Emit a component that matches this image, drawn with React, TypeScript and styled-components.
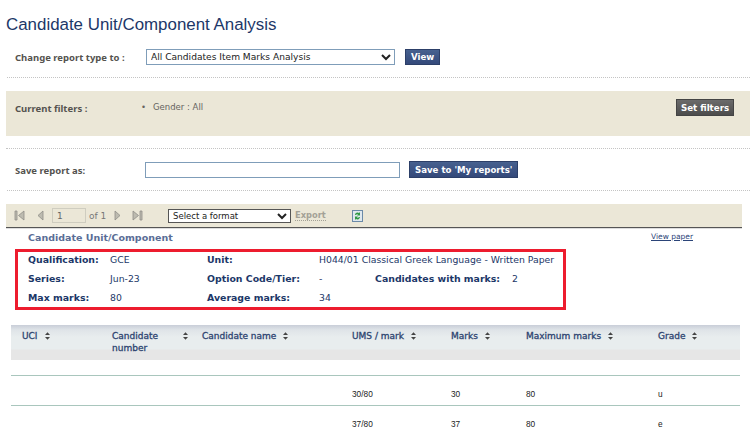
import React from "react";
import styled, { createGlobalStyle } from "styled-components";

const Global = createGlobalStyle`
  html, body { margin: 0; padding: 0; background: #fff; overflow: hidden; }
  body { font-family: "DejaVu Sans", Tahoma, sans-serif; }
`;

const Page = styled.div`
  width: 750px;
  height: 439px;
  overflow: hidden;
  position: relative;
`;

const Title = styled.h1`
  margin: 0;
  padding: 14px 0 0 6px;
  height: 35px;
  box-sizing: border-box;
  font: 400 16.900px/22px "Liberation Sans", sans-serif;
  color: #1c3768;
  white-space: nowrap;
`;

const FormRow = styled.div<{ $h: number; $pt?: number }>`
  display: flex;
  align-items: center;
  margin-left: 7px;
  padding: ${(p) => p.$pt ?? 0}px 0 0 8px;
  height: ${(p) => p.$h}px;
  box-sizing: border-box;
  border-bottom: 1px dotted #c4c4c4;
`;

const Label = styled.label`
  font: 700 9.500px/12px "Noto Sans", sans-serif;
  color: #55534f;
  white-space: nowrap;
  width: 131px;
  margin-top: 2px;
  flex: none;
`;

const Select = styled.select`
  width: 249px;
  height: 16px;
  box-sizing: border-box;
  border: 1px solid #7f9db9;
  background: #fff;
  padding: 0;
  font: 400 9.100px/12px "DejaVu Sans", sans-serif;
  color: #222;
  border-radius: 0;
`;

const PrimaryButton = styled.button<{ $h?: number; $ml?: number }>`
  margin-left: ${(p) => p.$ml ?? 10}px;
  height: ${(p) => p.$h ?? 16}px;
  padding: 0 5px;
  border: 1px solid #2c3f68;
  background: linear-gradient(#47618f, #34497a);
  color: #fff;
  font: 700 8.600px/12px "DejaVu Sans", sans-serif;
  white-space: nowrap;
`;

const FilterBand = styled.div`
  margin: 13px 0 0 6px;
  height: 45px;
  background: #ebe7d7;
  display: flex;
  align-items: flex-start;
`;

const FilterLabel = styled.span`
  font: 700 9.500px/12px "Noto Sans", sans-serif;
  color: #55534f;
  margin: 12px 0 0 9px;
  width: 126px;
  flex: none;
`;

const FilterList = styled.ul`
  margin: 10px 0 0 0;
  padding: 0;
  list-style: none;
  font: 400 8.500px/12px "DejaVu Sans", sans-serif;
  color: #66645f;
  flex: 1;
`;

const FilterItem = styled.li`
  display: flex;
  gap: 7px;
  &::before { content: "•"; }
`;

const SetFilters = styled.button`
  margin: 8px 16px 0 0;
  height: 17px;
  width: 58px;
  padding: 0;
  border: 1px solid #444;
  background: linear-gradient(#6b6b6b, #4c4c4c);
  color: #fff;
  font: 700 8.700px/12px "DejaVu Sans", sans-serif;
  white-space: nowrap;
`;

const Rule = styled.div`
  margin: 12px 0 0 6px;
  border-top: 1px dotted #c4c4c4;
`;

const TextInput = styled.input`
  width: 255px;
  height: 16px;
  margin-left: -1px;
  box-sizing: border-box;
  border: 1px solid #7f9db9;
  background: #fff;
  flex: none;
`;

const Toolbar = styled.div`
  margin: 13px 8px 0 6px;
  height: 24px;
  box-sizing: border-box;
  background: #ebe7d7;
  border-bottom: 1px solid #555;
  box-shadow: 0 1px 0 #ddd;
  display: flex;
  align-items: center;
  padding-left: 8px;
  font: 400 9px/12px "DejaVu Sans", sans-serif;
  color: #777;
`;

const NavIcon = styled.svg<{ $mr: number }>`
  width: 11px;
  height: 11px;
  flex: none;
  fill: #bdbbb0;
  stroke: #8f8e88;
  stroke-width: 0.800;
  margin-right: ${(p) => p.$mr}px;
`;

const PageBox = styled.input`
  width: 34px;
  height: 15px;
  box-sizing: border-box;
  border: 1px solid #cfcdc0;
  background: #ebe7d7;
  padding: 0 0 0 4px;
  font: 400 9px "DejaVu Sans", sans-serif;
  color: #666;
  margin-right: 3px;
`;

const OfText = styled.span`
  margin-right: 7px;
  width: 17px;
  white-space: nowrap;
`;

const FormatSelect = styled(Select)`
  width: 123px;
  height: 14px;
  margin-left: 25px;
  font-size: 8.500px;
  border-color: #555;
`;

const Export = styled.span`
  margin-left: 4px;
  font-size: 8.300px;
  font-weight: 700;
  color: #a3a196;
  border-bottom: 1px dotted #a3a196;
  line-height: 10px;
`;

const RefreshIcon = styled.svg`
  width: 11px;
  height: 12px;
  margin-left: 26px;
  flex: none;
`;

const HeadingRow = styled.div`
  display: flex;
  justify-content: space-between;
  height: 21px;
  padding: 3px 57px 0 28px;
  box-sizing: border-box;
`;

const Subheading = styled.h2`
  margin: 0;
  font: 700 9.500px/14px "DejaVu Sans", sans-serif;
  color: #5a6d96;
`;

const PaperLink = styled.a`
  font: 400 7.500px/12px "DejaVu Sans", sans-serif;
  color: #2b4478;
  text-decoration: underline;
`;

const InfoBox = styled.div`
  margin-left: 15px;
  width: 551px;
  height: 61px;
  box-sizing: border-box;
  border: 3px solid #ed1c2e;
  padding: 2px 0 0 10px;
  display: grid;
  grid-template-columns: 82px 97px 112px 56px 137px 1fr;
  grid-auto-rows: 19px;
  align-items: start;
  color: #1c3768;
`;

const InfoLabel = styled.span`
  font: 700 9.400px/12px "DejaVu Sans", sans-serif;
  white-space: nowrap;
`;

const InfoValue = styled.span<{ $span?: number }>`
  font: 400 9.300px/12px "DejaVu Sans", sans-serif;
  white-space: nowrap;
  grid-column: span ${(p) => p.$span ?? 1};
`;

const TableWrap = styled.div`
  margin: 15px 10px 0 11px;
`;

const columns = "90px 90px 150px 99px 75px 132px 93px";

const HeadRow = styled.div`
  display: grid;
  grid-template-columns: ${columns};
  height: 35px;
  background: linear-gradient(#c9ced8 0, #dfe4e8 5px, #e8edee 12px, #e8edee 24px, #e6e6e6 25px);
`;

const HeadCell = styled.div<{ $spread?: boolean }>`
  display: flex;
  padding: 5px ${(p) => (p.$spread ? "3px" : "0")} 0 11px;
  font: 400 9px/12px "DejaVu Sans", sans-serif;
  -webkit-text-stroke: 0.300px #2d4470;
  color: #2d4470;
  justify-content: ${(p) => (p.$spread ? "space-between" : "flex-start")};
  gap: 7px;
`;

const SortIcon = styled.svg`
  width: 5px;
  height: 8px;
  margin-top: 2px;
  fill: #444;
  flex: none;
`;

const Row = styled.div<{ $h: number }>`
  display: grid;
  grid-template-columns: ${columns};
  height: ${(p) => p.$h}px;
  border-bottom: 1px solid #a9c6bd;
  box-sizing: border-box;
  &:last-child { border-bottom: none; }
`;

const Cell = styled.div`
  padding: 12px 0 0 11px;
  font: 400 8.300px/13px "Liberation Sans", sans-serif;
  color: #222;
`;

const Sort = () => (
  <SortIcon viewBox="0 0 6 9">
    <path d="M3 0 6 3.400H0zM3 9 0 5.600h6z" />
  </SortIcon>
);

const headers: [string, boolean?][] = [
  ["UCI"],
  ["Candidate number", true],
  ["Candidate name"],
  ["UMS / mark"],
  ["Marks"],
  ["Maximum marks"],
  ["Grade"],
];

const rows = [
  ["30/80", "30", "80", "u"],
  ["37/80", "37", "80", "e"],
];

export default function App() {
  return (
    <Page>
      <Global />
      <Title>Candidate Unit/Component Analysis</Title>
      <FormRow $h={43} $pt={2}>
        <Label>Change report type to :</Label>
        <Select defaultValue="a">
          <option value="a">All Candidates Item Marks Analysis</option>
        </Select>
        <PrimaryButton>View</PrimaryButton>
      </FormRow>
      <FilterBand>
        <FilterLabel>Current filters :</FilterLabel>
        <FilterList>
          <FilterItem>Gender : All</FilterItem>
        </FilterList>
        <SetFilters>Set filters</SetFilters>
      </FilterBand>
      <Rule />
      <FormRow $h={42}>
        <Label>Save report as:</Label>
        <TextInput />
        <PrimaryButton $h={17} $ml={9}>Save to 'My reports'</PrimaryButton>
      </FormRow>
      <Toolbar>
        <NavIcon $mr={10} viewBox="0 0 11 11"><path d="M1 1h2v9H1zM10 1v9L4.500 5.500z" /></NavIcon>
        <NavIcon $mr={6} viewBox="0 0 11 11"><path d="M8 1v9L3 5.500z" /></NavIcon>
        <PageBox defaultValue="1" />
        <OfText>of 1</OfText>
        <NavIcon $mr={8} viewBox="0 0 11 11"><path d="M2 1v9l5-4.500z" /></NavIcon>
        <NavIcon $mr={0} viewBox="0 0 11 11"><path d="M1 1v9l5.500-4.500zM8 1h2v9H8z" /></NavIcon>
        <FormatSelect defaultValue="f">
          <option value="f">Select a format</option>
        </FormatSelect>
        <Export>Export</Export>
        <RefreshIcon viewBox="0 0 11 12">
          <rect x="0.500" y="0.500" width="10" height="11" fill="#dfe8ee" stroke="#6b8aa8" />
          <path d="M3 5a2.600 2.600 0 0 1 4-2l1-1v3.500H5l1-1a1.400 1.400 0 0 0-2 .5zM8 7a2.600 2.600 0 0 1-4 2l-1 1V6.500h3l-1 1a1.400 1.400 0 0 0 2-.5z" fill="#2f9a44" />
        </RefreshIcon>
      </Toolbar>
      <HeadingRow>
        <Subheading>Candidate Unit/Component</Subheading>
        <PaperLink href="#">View paper</PaperLink>
      </HeadingRow>
      <InfoBox>
        <InfoLabel>Qualification:</InfoLabel>
        <InfoValue>GCE</InfoValue>
        <InfoLabel>Unit:</InfoLabel>
        <InfoValue $span={3}>H044/01 Classical Greek Language - Written Paper</InfoValue>
        <InfoLabel>Series:</InfoLabel>
        <InfoValue>Jun-23</InfoValue>
        <InfoLabel>Option Code/Tier:</InfoLabel>
        <InfoValue>-</InfoValue>
        <InfoLabel>Candidates with marks:</InfoLabel>
        <InfoValue>2</InfoValue>
        <InfoLabel>Max marks:</InfoLabel>
        <InfoValue>80</InfoValue>
        <InfoLabel>Average marks:</InfoLabel>
        <InfoValue>34</InfoValue>
      </InfoBox>
      <TableWrap>
        <HeadRow>
          {headers.map(([h, spread]) => (
            <HeadCell key={h} $spread={spread}>
              <span>{h}</span>
              <Sort />
            </HeadCell>
          ))}
        </HeadRow>
        <Row $h={16} />
        {rows.map((r) => (
          <Row key={r[0]} $h={30}>
            <Cell />
            <Cell />
            <Cell />
            {r.map((v, i) => (
              <Cell key={i}>{v}</Cell>
            ))}
          </Row>
        ))}
      </TableWrap>
    </Page>
  );
}
